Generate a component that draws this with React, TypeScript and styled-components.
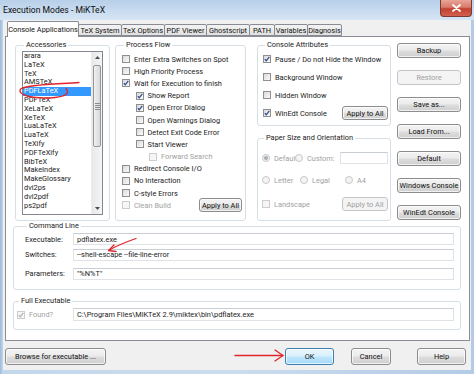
import styled, { createGlobalStyle } from 'styled-components';

const FONT = `Roboto, "Open Sans", "Liberation Sans", sans-serif`;

const GlobalStyle = createGlobalStyle`
  html, body { margin: 0; padding: 0; }
  body { width: 474px; height: 374px; overflow: hidden; font-family: ${FONT}; }
  * { box-sizing: border-box; }
`;

const Window = styled.div`
  position: relative;
  width: 474px;
  height: 374px;
  display: flex;
  flex-direction: column;
  background: linear-gradient(90deg, #9dbad9 0px, #c3d7ec 3px, #cadcef 50%, #b3cbe5 100%);
  font-size: 7.4px;
  color: #1b1b1b;
`;

const TitleBar = styled.div`
  height: 20px;
  flex: none;
  display: flex;
  justify-content: space-between;
  align-items: flex-start;
  padding-left: 3px;
  background: linear-gradient(180deg, #b7cfe8 0%, #c9dcf0 55%, #d6e5f4 100%);
`;

const Title = styled.span`
  line-height: 21px;
  font-size: 8.6px;
  color: #0c0c0c;
`;

const CloseBtn = styled.div`
  width: 32px;
  height: 17px;
  margin-right: 2px;
  border: 1px solid #7b3a33;
  border-top: none;
  border-radius: 0 0 4px 4px;
  background: linear-gradient(180deg, #e8a597 0%, #d87a6b 45%, #c2402f 55%, #d2604f 100%);
  display: flex;
  align-items: center;
  justify-content: center;
`;

const Body = styled.div`
  flex: 1;
  margin: 0 3px 4px 3px;
  background: #f0f0f0;
  display: flex;
  flex-direction: column;
  padding: 0 1px 0 2px;
`;

const TabsRow = styled.div`
  height: 16px;
  flex: none;
  display: flex;
  align-items: flex-end;
  padding-left: 2px;
  position: relative;
  z-index: 1;
`;

const Tab = styled.div<{ $w: number; $active?: boolean }>`
  width: ${p => p.$w + 1}px;
  height: ${p => (p.$active ? 16 : 12)}px;
  margin-right: -1px;
  margin-bottom: ${p => (p.$active ? -1 : 0)}px;
  border: 1px solid #898c95;
  border-bottom: ${p => (p.$active ? 'none' : '1px solid #898c95')};
  border-radius: 2px 2px 0 0;
  background: ${p => (p.$active ? '#fff' : 'linear-gradient(180deg, #f3f3f3 0%, #ebebeb 50%, #dfdfdf 100%)')};
  display: flex;
  align-items: center;
  justify-content: center;
  white-space: nowrap;
  color: #111;
  position: relative;
  z-index: ${p => (p.$active ? 2 : 1)};
`;

const Panel = styled.div`
  height: 305px;
  flex: none;
  background: #fff;
  border: 1px solid #898c95;
  padding: 3px 8px 0 7px;
  display: flex;
  flex-direction: column;
`;

const TopSection = styled.div`
  height: 181px;
  flex: none;
  display: flex;
`;

const Group = styled.fieldset<{ $w?: number; $pad: string; $ml?: number; $mt?: number; $grow?: boolean }>`
  margin: ${p => p.$mt ?? 0}px 0 0 ${p => p.$ml ?? 0}px;
  padding: ${p => p.$pad};
  width: ${p => (p.$w ? p.$w + 'px' : 'auto')};
  flex: ${p => (p.$grow ? '1' : 'none')};
  min-width: 0;
  border: 1px solid #d5dfe5;
  border-radius: 3px;
  display: flex;
  flex-direction: column;
`;

const Legend = styled.legend`
  padding: 0 2px;
  margin-left: 2px;
  line-height: 10px;
  color: #1a1a1a;
`;

const ListBox = styled.div`
  width: 81px;
  height: 164px;
  border: 1px solid #828790;
  display: flex;
  background: #fff;
  overflow: hidden;
`;

const ListItems = styled.div`
  flex: 1;
  overflow: hidden;
`;

const ListItem = styled.div<{ $selected?: boolean }>`
  height: 8.8px;
  line-height: 8.8px;
  padding-left: 1px;
  white-space: nowrap;
  background: ${p => (p.$selected ? '#3399ff' : 'transparent')};
  color: ${p => (p.$selected ? '#fff' : '#1b1b1b')};
`;

const ScrollBar = styled.div`
  width: 11px;
  flex: none;
  display: flex;
  flex-direction: column;
  background: linear-gradient(90deg, #e8e8e8, #f5f5f5);
  border-left: 1px solid #ececec;
`;

const ScrollArrow = styled.div`
  height: 11px;
  flex: none;
  display: flex;
  align-items: center;
  justify-content: center;
`;

const Thumb = styled.div`
  margin: 2px 1px 0 1px;
  height: 82px;
  border: 1px solid #979797;
  border-radius: 2px;
  background: linear-gradient(90deg, #f0f0f0, #d9d9d9);
  display: flex;
  flex-direction: column;
  align-items: center;
  justify-content: center;
  gap: 1px;
`;

const Grip = styled.span`
  width: 5px;
  height: 1px;
  background: #8a8a8a;
`;

const Spacer = styled.div`
  flex: 1;
`;

const CheckRow = styled.div<{ $h?: number; $indent?: number }>`
  height: ${p => p.$h ?? 12.2}px;
  flex: none;
  display: flex;
  align-items: center;
  padding-left: ${p => p.$indent ?? 0}px;
  white-space: nowrap;
`;

const OptLabel = styled.span<{ $disabled?: boolean }>`
  margin-left: 4px;
  color: ${p => (p.$disabled ? '#a2a2a2' : '#1b1b1b')};
`;

const Box = styled.span<{ $disabled?: boolean }>`
  flex: none;
  width: 8px;
  height: 8px;
  border: 1px solid ${p => (p.$disabled ? '#cdcdcd' : '#8e8f8f')};
  background: ${p => (p.$disabled ? '#f6f6f6' : 'linear-gradient(135deg, #d9d9d9, #fbfbfb)')};
  display: flex;
  align-items: center;
  justify-content: center;
`;

const RadioCircle = styled.span<{ $disabled?: boolean }>`
  flex: none;
  width: 8px;
  height: 8px;
  border-radius: 50%;
  border: 1px solid ${p => (p.$disabled ? '#c8c8c8' : '#8e8f8f')};
  background: #f4f4f4;
  display: flex;
  align-items: center;
  justify-content: center;
`;

const RadioDot = styled.span`
  width: 4px;
  height: 4px;
  border-radius: 50%;
  background: #a7adb4;
`;

const Item = styled.div<{ $w?: number }>`
  width: ${p => (p.$w ? p.$w + 'px' : 'auto')};
  flex: none;
  display: flex;
  align-items: center;
`;

const Btn = styled.button<{ $w?: number; $h?: number; $disabled?: boolean; $primary?: boolean; $ml?: number; $mr?: number }>`
  width: ${p => (p.$w ? p.$w + 'px' : 'auto')};
  height: ${p => p.$h ?? 15}px;
  margin: 0 ${p => p.$mr ?? 0}px 0 ${p => p.$ml ?? 0}px;
  padding: 0;
  flex: none;
  font-family: ${FONT};
  font-size: 7.4px;
  white-space: nowrap;
  display: flex;
  align-items: center;
  justify-content: center;
  border-radius: 3px;
  border: 1px solid ${p => (p.$primary ? '#3c7fb1' : p.$disabled ? '#c2c5c8' : '#8c8c8c')};
  color: ${p => (p.$disabled ? '#a0a0a0' : '#111')};
  background: ${p =>
    p.$primary
      ? 'linear-gradient(180deg, #eaf6fd 0%, #d9f0fc 48%, #bee6fd 52%, #a7d9f5 100%)'
      : p.$disabled
      ? '#f4f4f4'
      : 'linear-gradient(180deg, #f4f4f4 0%, #ebebeb 48%, #dddddd 52%, #cfcfcf 100%)'};
  box-shadow: inset 0 0 0 1px ${p => (p.$disabled ? 'transparent' : 'rgba(255,255,255,0.7)')};
`;

const ButtonColumn = styled.div`
  width: 64px;
  margin-left: 6px;
  padding-top: 3px;
  display: flex;
  flex-direction: column;
  gap: 12px;
`;

const ConsoleColumn = styled.div`
  width: 134px;
  margin-left: 11px;
  display: flex;
  flex-direction: column;
  gap: 7px;
`;

const SplitRow = styled(CheckRow)`
  justify-content: space-between;
`;

const Input = styled.div<{ $w?: number; $h?: number }>`
  width: ${p => (p.$w ? p.$w + 'px' : 'auto')};
  flex: ${p => (p.$w ? 'none' : '1')};
  height: ${p => p.$h ?? 12}px;
  border: 1px solid #dfe3e8;
  border-top-color: #c9ced4;
  background: #fff;
  display: flex;
  align-items: center;
  padding-left: 3px;
  white-space: nowrap;
  overflow: hidden;
  color: #1b1b1b;
`;

const FieldRow = styled.div<{ $h: number }>`
  height: ${p => p.$h}px;
  display: flex;
  align-items: center;
`;

const FieldLabel = styled.span<{ $w: number; $disabled?: boolean }>`
  width: ${p => p.$w}px;
  flex: none;
  color: ${p => (p.$disabled ? '#a2a2a2' : '#1b1b1b')};
  display: flex;
  align-items: center;
`;

const ButtonRow = styled.div`
  flex: 1;
  display: flex;
  align-items: center;
  padding-top: 1px;
`;

const Overlay = styled.svg`
  position: absolute;
  left: 0;
  top: 0;
  pointer-events: none;
`;

const CheckBox = ({ checked, disabled }: { checked?: boolean; disabled?: boolean }) => (
  <Box $disabled={disabled}>
    {checked && (
      <svg width="6" height="6" viewBox="0 0 6 6">
        <path d="M0.8 3.2 L2.3 4.8 L5.3 0.8" fill="none" stroke={disabled ? '#b5b5b5' : '#3a4f8f'} strokeWidth="1.3" />
      </svg>
    )}
  </Box>
);

const Radio = ({ checked }: { checked?: boolean }) => (
  <RadioCircle $disabled>{checked && <RadioDot />}</RadioCircle>
);

const accessories = [
  'arara', 'LaTeX', 'TeX', 'AMSTeX', 'PDFLaTeX', 'PDFTeX', 'XeLaTeX', 'XeTeX', 'LuaLaTeX', 'LuaTeX',
  'TeXify', 'PDFTeXify', 'BibTeX', 'MakeIndex', 'MakeGlossary', 'dvi2ps', 'dvi2pdf', 'ps2pdf',
];

const flow = [
  { label: 'Enter Extra Switches on Spot', level: 0 },
  { label: 'High Priority Process', level: 0 },
  { label: 'Wait for Execution to finish', level: 0, checked: true },
  { label: 'Show Report', level: 1, checked: true },
  { label: 'Open Error Dialog', level: 1, checked: true },
  { label: 'Open Warnings Dialog', level: 1 },
  { label: 'Detect Exit Code Error', level: 1 },
  { label: 'Start Viewer', level: 1 },
  { label: 'Forward Search', level: 2, disabled: true },
  { label: 'Redirect Console I/O', level: 0 },
  { label: 'No Interaction', level: 0 },
  { label: 'C-style Errors', level: 0 },
];

const tabs = [
  { label: 'Console Applications', w: 71, active: true },
  { label: 'TeX System', w: 43 },
  { label: 'TeX Options', w: 43 },
  { label: 'PDF Viewer', w: 42 },
  { label: 'Ghostscript', w: 43 },
  { label: 'PATH', w: 25 },
  { label: 'Variables', w: 33 },
  { label: 'Diagnosis', w: 34 },
];

const sideButtons = ['Backup', 'Restore', 'Save as...', 'Load From...', 'Default', 'Windows Console', 'WinEdt Console'];

export default function App() {
  return (
    <Window>
      <GlobalStyle />
      <TitleBar>
        <Title>Execution Modes - MiKTeX</Title>
        <CloseBtn>
          <svg width="9" height="8" viewBox="0 0 9 8">
            <path d="M1 1 L8 7 M8 1 L1 7" stroke="#fff" strokeWidth="1.8" strokeLinecap="round" />
          </svg>
        </CloseBtn>
      </TitleBar>
      <Body>
        <TabsRow>
          {tabs.map(t => (
            <Tab key={t.label} $w={t.w} $active={t.active}>{t.label}</Tab>
          ))}
        </TabsRow>
        <Panel>
          <TopSection>
            <Group $w={95} $ml={2} $pad="1px 6px 0 6px">
              <Legend>Accessories</Legend>
              <ListBox>
                <ListItems>
                  {accessories.map(a => (
                    <ListItem key={a} $selected={a === 'PDFLaTeX'}>{a}</ListItem>
                  ))}
                </ListItems>
                <ScrollBar>
                  <ScrollArrow>
                    <svg width="5" height="3" viewBox="0 0 5 3"><path d="M0 3 L2.5 0 L5 3 Z" fill="#4d4d4d" /></svg>
                  </ScrollArrow>
                  <Thumb>
                    <Grip /><Grip /><Grip /><Grip />
                  </Thumb>
                  <Spacer />
                  <ScrollArrow>
                    <svg width="5" height="3" viewBox="0 0 5 3"><path d="M0 0 L2.5 3 L5 0 Z" fill="#4d4d4d" /></svg>
                  </ScrollArrow>
                </ScrollBar>
              </ListBox>
            </Group>

            <Group $w={131} $ml={5} $pad="3px 3px 0 6px">
              <Legend>Process Flow</Legend>
              {flow.map(f => (
                <CheckRow key={f.label} $indent={f.level * 13.5}>
                  <CheckBox checked={f.checked} disabled={f.disabled} />
                  <OptLabel $disabled={f.disabled}>{f.label}</OptLabel>
                </CheckRow>
              ))}
              <SplitRow>
                <Item>
                  <CheckBox disabled />
                  <OptLabel $disabled>Clean Build</OptLabel>
                </Item>
                <Btn $w={43} $h={14}>Apply to All</Btn>
              </SplitRow>
            </Group>

            <ConsoleColumn>
              <Group $pad="0 2px 3px 5px">
                <Legend>Console Attributes</Legend>
                <CheckRow $h={18}>
                  <CheckBox checked />
                  <OptLabel>Pause / Do not Hide the Window</OptLabel>
                </CheckRow>
                <CheckRow $h={18}>
                  <CheckBox />
                  <OptLabel>Background Window</OptLabel>
                </CheckRow>
                <CheckRow $h={18}>
                  <CheckBox />
                  <OptLabel>Hidden Window</OptLabel>
                </CheckRow>
                <SplitRow $h={18}>
                  <Item>
                    <CheckBox checked />
                    <OptLabel>WinEdt Console</OptLabel>
                  </Item>
                  <Btn $w={46} $h={14}>Apply to All</Btn>
                </SplitRow>
              </Group>

              <Group $pad="4px 2px 0 4px" $grow>
                <Legend>Paper Size and Orientation</Legend>
                <CheckRow $h={22}>
                  <Item $w={33}>
                    <Radio checked />
                    <OptLabel $disabled>Default</OptLabel>
                  </Item>
                  <Item $w={45}>
                    <Radio />
                    <OptLabel $disabled>Custom:</OptLabel>
                  </Item>
                  <Input $w={48} />
                </CheckRow>
                <CheckRow $h={22}>
                  <Item $w={38}>
                    <Radio />
                    <OptLabel $disabled>Letter</OptLabel>
                  </Item>
                  <Item $w={45}>
                    <Radio />
                    <OptLabel $disabled>Legal</OptLabel>
                  </Item>
                  <Item>
                    <Radio />
                    <OptLabel $disabled>A4</OptLabel>
                  </Item>
                </CheckRow>
                <SplitRow $h={26}>
                  <Item>
                    <CheckBox disabled />
                    <OptLabel $disabled>Landscape</OptLabel>
                  </Item>
                  <Btn $w={46} $h={14} $disabled>Apply to All</Btn>
                </SplitRow>
              </Group>
            </ConsoleColumn>

            <ButtonColumn>
              {sideButtons.map(b => (
                <Btn key={b} $w={64} $disabled={b === 'Restore'}>{b}</Btn>
              ))}
            </ButtonColumn>
          </TopSection>

          <Group $pad="2px 6px 6px 11px">
            <Legend>Command Line</Legend>
            <FieldRow $h={12}>
              <FieldLabel $w={48}>Executable:</FieldLabel>
              <Input>pdflatex.exe</Input>
            </FieldRow>
            <FieldRow $h={19}>
              <FieldLabel $w={48}>Switches:</FieldLabel>
              <Input>--shell-escape --file-line-error</Input>
            </FieldRow>
            <FieldRow $h={19}>
              <FieldLabel $w={48}>Parameters:</FieldLabel>
              <Input>"%N%T"</Input>
            </FieldRow>
          </Group>

          <Group $pad="2px 6px 8px 3px" $mt={6}>
            <Legend>Full Executable</Legend>
            <FieldRow $h={13}>
              <FieldLabel $w={56} $disabled>
                <CheckBox checked disabled />
                <OptLabel $disabled>Found?</OptLabel>
              </FieldLabel>
              <Input $h={13}>C:\Program Files\MiKTeX 2.9\miktex\bin\pdflatex.exe</Input>
            </FieldRow>
          </Group>
        </Panel>
        <ButtonRow>
          <Btn $w={101} $h={17}>Browse for executable ...</Btn>
          <Spacer />
          <Btn $w={49} $h={17} $primary>OK</Btn>
          <Btn $w={40} $h={17} $ml={17}>Cancel</Btn>
          <Btn $w={49} $h={17} $ml={26} $mr={4}>Help</Btn>
        </ButtonRow>
      </Body>

      <Overlay width="474" height="374" viewBox="0 0 474 374">
        <g fill="none" stroke="#e0262b" strokeWidth="1.3" strokeLinecap="round">
          <path d="M79 82.5 C62 84, 28 84, 20.5 89 C17 95, 32 99.5, 55 97.5 C66 96.5, 70 93, 66 88.5" />
          <path d="M136 238.5 C126 242, 116 246, 108.5 250.5" />
          <path d="M108.5 250.5 L114 245 M108.5 250.5 L116 251.5" />
          <path d="M235 355.5 L283 355.5" />
          <path d="M283 355.5 L275 350 M283 355.5 L275 361" />
        </g>
      </Overlay>
    </Window>
  );
}
